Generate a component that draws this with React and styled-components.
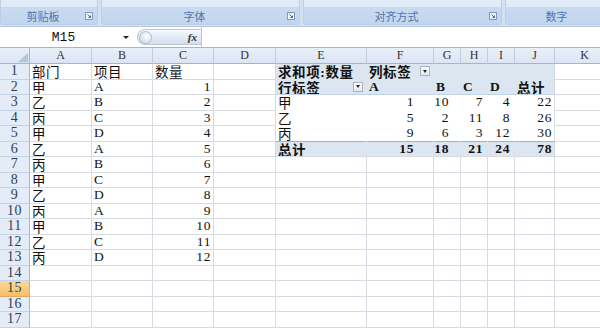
import React from 'react';
import styled, { createGlobalStyle } from 'styled-components';

const GlobalStyle = createGlobalStyle`
  html, body { margin: 0; padding: 0; background: #fff; overflow: hidden; }
  body { font-family: "Liberation Serif", "Noto Sans CJK SC", serif; }
`;

const Window = styled.div`
  width: 600px;
  height: 331px;
  overflow: hidden;
  display: flex;
  flex-direction: column;
  background: #fff;
`;

const Ribbon = styled.div`
  display: flex;
  gap: 3px;
  width: 620px;
  height: 27px;
  box-sizing: border-box;
  padding-bottom: 1px;
  background: #d3e1f2;
  border-bottom: 1px solid #b3c7e0;
`;

const Group = styled.div`
  width: ${p => p.$w}px;
  flex: none;
  display: flex;
  flex-direction: column;
  justify-content: flex-end;
  box-sizing: border-box;
  background: linear-gradient(#e2ecf8, #d9e6f5);
  border: 1px solid #bccfe7;
  border-top: none;
  border-radius: 0 0 3px 3px;
`;

const LabelStrip = styled.div`
  height: 17px;
  display: flex;
  align-items: center;
  background: linear-gradient(#c9dbf1, #c1d5ee);
`;

const GroupLabel = styled.span`
  flex: 1;
  text-align: center;
  font-family: "Noto Sans CJK SC", sans-serif;
  font-size: 11px;
  color: #4f74ab;
`;

const Launcher = styled.svg`
  width: 8px;
  height: 8px;
  margin-right: 4px;
  flex: none;
`;

const FormulaBar = styled.div`
  display: flex;
  align-items: center;
  height: 21px;
  box-sizing: border-box;
  border-bottom: 1px solid #9eb6ce;
  background: #fff;
`;

const NameBox = styled.div`
  width: 137px;
  height: 100%;
  display: flex;
  align-items: center;
  flex: none;
`;

const NameText = styled.span`
  flex: 1;
  text-align: center;
  padding-left: 4px;
  font-family: "Liberation Mono", monospace;
  font-size: 13px;
  color: #111;
`;

const DropArrow = styled.span`
  width: 0;
  height: 0;
  margin-right: 8px;
  border-left: 3px solid transparent;
  border-right: 3px solid transparent;
  border-top: 3px solid #222;
`;

const FxPill = styled.div`
  width: 64px;
  height: 16px;
  flex: none;
  display: flex;
  align-items: center;
  justify-content: space-between;
  box-sizing: border-box;
  background: linear-gradient(#f6f9fd, #d2deec);
  border: 1px solid #b9c9dd;
  border-right: none;
  border-radius: 9px 0 0 9px;
`;

const Knob = styled.span`
  width: 13px;
  height: 13px;
  margin-left: 1px;
  border-radius: 50%;
  border: 1px solid #aebdd0;
  box-sizing: border-box;
  background: radial-gradient(circle at 60% 40%, #ffffff, #c7d3e2);
`;

const FxText = styled.span`
  margin-right: 4px;
  font-family: "Liberation Serif", serif;
  font-style: italic;
  font-weight: bold;
  font-size: 11px;
  color: #333;
`;

const FormulaInput = styled.div`
  flex: 1;
  height: 100%;
  border-left: 1px solid #b9c9dd;
`;

const Sheet = styled.div`
  display: grid;
  grid-template-columns: 30px 62px 61px 61px 62px 91px 67px 27px 27px 27px 40px 60px;
  grid-template-rows: 16px;
  grid-auto-rows: 15.5px;
`;

const ColHead = styled.div`
  display: flex;
  align-items: center;
  justify-content: center;
  box-sizing: border-box;
  background: linear-gradient(#e9f0f9, #dbe5f3);
  border-right: 1px solid #bfcde0;
  border-bottom: 1px solid #9eb6ce;
  font-size: 12px;
  color: #333;
`;

const Corner = styled(ColHead)`
  justify-content: flex-end;
  align-items: flex-end;
  border-right: 1px solid #9eb6ce;
`;

const RowHead = styled.div`
  display: flex;
  align-items: center;
  justify-content: center;
  box-sizing: border-box;
  background: ${p => (p.$active ? 'linear-gradient(#fbd996, #f4c06a)' : '#e4ecf7')};
  border-right: 1px solid #9eb6ce;
  border-bottom: 1px solid ${p => (p.$active ? '#e1a75a' : '#c5d3e6')};
  font-size: 14px;
  letter-spacing: 0.5px;
  color: #2e3f55;
`;

const Cell = styled.div`
  display: flex;
  align-items: center;
  justify-content: ${p => (p.$align === 'right' ? 'flex-end' : 'flex-start')};
  box-sizing: border-box;
  padding: 0 ${p => p.$pr ?? 2}px 0 2px;
  overflow: hidden;
  white-space: nowrap;
  background: ${p => (p.$band ? '#dce6f1' : '#fff')};
  border-right: 1px solid ${p => (p.$pivot && !p.$edge ? 'transparent' : '#d6dbe3')};
  border-bottom: 1px solid ${p => p.$line || (p.$pivot && !p.$total ? 'transparent' : '#d6dbe3')};
  font-size: 13.5px;
  letter-spacing: 0.6px;
  font-weight: ${p => (p.$bold ? 700 : 400)};
  color: #111;
`;

const CellText = styled.span`
  flex: 1;
  text-align: ${p => (p.$align === 'right' ? 'right' : 'left')};
`;

const DropButton = styled.span`
  width: 10px;
  height: 10px;
  flex: none;
  display: flex;
  align-items: center;
  justify-content: center;
  margin-right: 1px;
  box-sizing: border-box;
  border: 1px solid #a9b3bf;
  background: linear-gradient(#fdfdfd, #e3e7ec);
  &::after {
    content: '';
    border-left: 2.5px solid transparent;
    border-right: 2.5px solid transparent;
    border-top: 3px solid #222;
  }
`;

const groups = [
  { label: '剪贴板', w: 98 },
  { label: '字体', w: 199 },
  { label: '对齐方式', w: 199 },
  { label: '数字', w: 115 },
];

const COLS = ['A', 'B', 'C', 'D', 'E', 'F', 'G', 'H', 'I', 'J', 'K'];
const depts = ['甲', '乙', '丙'];
const items = ['A', 'B', 'C', 'D'];
const pivotVals = { 甲: [1, 10, 7, 4, 22], 乙: [5, 2, 11, 8, 26], 丙: [9, 6, 3, 12, 30] };
const totals = [15, 18, 21, 24, 78];
const numPad = [19, 11, 4, 4, 2];

function getCell(r, c) {
  if (c <= 2) {
    if (r === 1) return { text: ['部门', '项目', '数量'][c] };
    if (r >= 2 && r <= 13) {
      const i = r - 2;
      if (c === 0) return { text: depts[i % 3] };
      if (c === 1) return { text: items[i % 4] };
      return { text: String(i + 1), align: 'right' };
    }
    return {};
  }
  if (c >= 4 && c <= 9 && r <= 6) {
    const k = c - 4;
    const base = { pivot: true, edge: c === 9 };
    if (r === 1)
      return { ...base, band: true, bold: true, text: k === 0 ? '求和项:数量' : k === 1 ? '列标签' : '', dropdown: k === 1 };
    if (r === 2)
      return { ...base, band: true, bold: true, line: '#c2d4ea', text: ['行标签', 'A', 'B', 'C', 'D', '总计'][k], dropdown: k === 0 };
    if (r <= 5) {
      const d = depts[r - 3];
      const line = r === 5 ? '#95b3d7' : undefined;
      return k === 0
        ? { ...base, line, text: d }
        : { ...base, line, text: String(pivotVals[d][k - 1]), align: 'right', pr: numPad[k - 1] };
    }
    return k === 0
      ? { ...base, band: true, bold: true, total: true, text: '总计' }
      : { ...base, band: true, bold: true, total: true, text: String(totals[k - 1]), align: 'right', pr: numPad[k - 1] };
  }
  return {};
}

const rows = Array.from({ length: 17 }, (_, i) => i + 1);

export default function App() {
  return (
    <Window>
      <GlobalStyle />
      <Ribbon>
        {groups.map(g => (
          <Group key={g.label} $w={g.w}>
            <LabelStrip>
              <GroupLabel>{g.label}</GroupLabel>
              <Launcher viewBox="0 0 8 8">
                <path d="M0.5 0.5h7v7h-7z" fill="#eef3fa" stroke="#7d97bd" />
                <path d="M2.5 2.5l3 3M5.5 3.5v2h-2" fill="none" stroke="#4d6c9a" strokeWidth="1" />
              </Launcher>
            </LabelStrip>
          </Group>
        ))}
      </Ribbon>
      <FormulaBar>
        <NameBox>
          <NameText>M15</NameText>
          <DropArrow />
        </NameBox>
        <FxPill>
          <Knob />
          <FxText>fx</FxText>
        </FxPill>
        <FormulaInput />
      </FormulaBar>
      <Sheet>
        <Corner>
          <svg width="12" height="11" viewBox="0 0 12 11">
            <path d="M11 1V10H1Z" fill="#b4c6dc" />
          </svg>
        </Corner>
        {COLS.map(l => (
          <ColHead key={l}>{l}</ColHead>
        ))}
        {rows.map(r => (
          <React.Fragment key={r}>
            <RowHead $active={r === 15}>{r}</RowHead>
            {COLS.map((l, c) => {
              const cell = getCell(r, c);
              return (
                <Cell
                  key={l}
                  $align={cell.align}
                  $bold={cell.bold}
                  $band={cell.band}
                  $pivot={cell.pivot}
                  $edge={cell.edge}
                  $total={cell.total}
                  $line={cell.line}
                  $pr={cell.pr}
                >
                  <CellText $align={cell.align}>{cell.text}</CellText>
                  {cell.dropdown && <DropButton />}
                </Cell>
              );
            })}
          </React.Fragment>
        ))}
      </Sheet>
    </Window>
  );
}
